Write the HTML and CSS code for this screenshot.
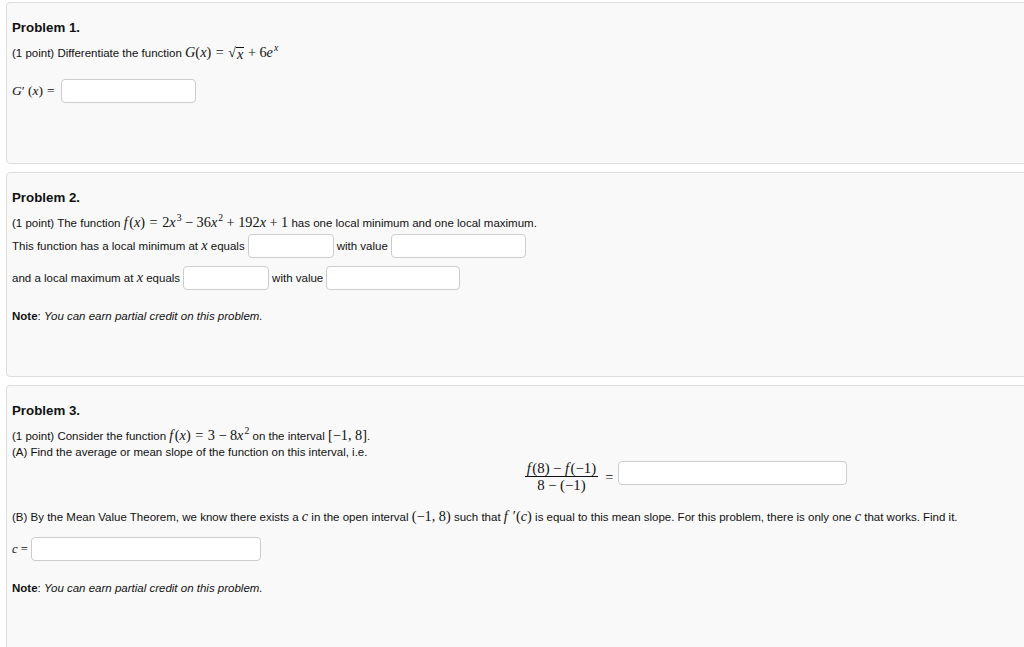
FILE: index.html
```html
<!DOCTYPE html>
<html lang="en">
<head>
<meta charset="utf-8">
<title>Problems</title>
<link rel="stylesheet" href="styles.css">
</head>
<body>
<main class="set">

  <section class="problem problem-1">
    <h3 class="problem-title">Problem 1.</h3>
    <p class="text">(1 point) Differentiate the function <span class="math"><i>G</i>(<i>x</i>)<span class="rel">=</span><span class="sqrt"><span class="radic">√</span><span class="radicand"><i>x</i></span></span><span class="op">+</span>6<i>e</i><sup><i>x</i></sup></span></p>
    <div class="answer-row row-first">
      <span class="math label-math"><i>G</i>′ (<i>x</i>)<span class="rel">=</span></span>
      <input class="answer w-135" type="text">
    </div>
  </section>

  <section class="problem problem-2">
    <h3 class="problem-title">Problem 2.</h3>
    <p class="text">(1 point) The function <span class="math"><i class="fn">f</i>(<i>x</i>)<span class="rel">=</span>2<i>x</i><sup>3</sup><span class="op">−</span>36<i>x</i><sup>2</sup><span class="op">+</span>192<i>x</i><span class="op">+</span>1</span> has one local minimum and one local maximum.</p>
    <div class="answer-row row-tight">
      <span>This function has a local minimum at <span class="math"><i>x</i></span> equals</span>
      <input class="answer w-86" type="text">
      <span>with value</span>
      <input class="answer w-135" type="text">
    </div>
    <div class="answer-row row-next">
      <span>and a local maximum at <span class="math"><i>x</i></span> equals</span>
      <input class="answer w-86" type="text">
      <span>with value</span>
      <input class="answer w-134" type="text">
    </div>
    <p class="note note-2"><b>Note</b>: <em>You can earn partial credit on this problem.</em></p>
  </section>

  <section class="problem problem-3">
    <h3 class="problem-title">Problem 3.</h3>
    <p class="text">(1 point) Consider the function <span class="math"><i class="fn">f</i>(<i>x</i>)<span class="rel">=</span>3<span class="op">−</span>8<i>x</i><sup>2</sup></span> on the interval <span class="math">[−1, 8]</span>.<br>(A) Find the average or mean slope of the function on this interval, i.e.</p>
    <div class="display">
      <span class="math frac">
        <span class="num"><i class="fn">f</i>(8)<span class="op">−</span><i class="fn">f</i>(−1)</span>
        <span class="den">8<span class="op">−</span>(−1)</span>
      </span>
      <span class="math eq">=</span>
      <input class="answer w-229" type="text">
    </div>
    <p class="text part-b">(B) By the Mean Value Theorem, we know there exists a <span class="math"><i>c</i></span> in the open interval <span class="math">(−1, 8)</span> such that <span class="math"><i class="fn">f</i> ′(<i>c</i>)</span> is equal to this mean slope. For this problem, there is only one <span class="math"><i>c</i></span> that works. Find it.</p>
    <div class="answer-row row-c">
      <span class="math small-math"><i>c</i> =</span>
      <input class="answer w-230" type="text">
    </div>
    <p class="note note-3"><b>Note</b>: <em>You can earn partial credit on this problem.</em></p>
  </section>

</main>
</body>
</html>
```

FILE: styles.css
```css
html, body {
  margin: 0;
  padding: 0;
  overflow: hidden;
  background: #ffffff;
}

body {
  font-family: "Liberation Sans", Arial, Helvetica, sans-serif;
  font-size: 11.5px;
  line-height: 16px;
  color: #111111;
}

.set {
  padding: 2px 0 0 6px;
  display: flex;
  flex-direction: column;
  gap: 8px;
}

.problem {
  box-sizing: border-box;
  width: 1360px;
  background: #f9f9f9;
  border: 1px solid #dddddd;
  border-radius: 4px;
  padding: 17px 5px 0 5px;
}

.problem-1 { height: 162px; }
.problem-2 { height: 205px; }
.problem-3 { height: 320px; }

.problem-title {
  margin: 0;
  font-size: 13.3px;
  font-weight: bold;
  line-height: 16px;
}

.text {
  margin: 9px 0 0 0;
}

.answer-row {
  display: flex;
  align-items: center;
  gap: 3px;
  height: 24px;
}

.row-first { margin-top: 18px; }
.row-tight { margin-top: 3px; }
.row-next { margin-top: 8px; }
.row-c { margin-top: 12px; }

.answer {
  box-sizing: border-box;
  height: 24px;
  margin: 0;
  padding: 2px 6px;
  border: 1px solid #cccccc;
  border-radius: 4px;
  background: #ffffff;
  font: inherit;
}

.w-86 { width: 86px; }
.w-134 { width: 134px; }
.w-135 { width: 135px; }
.w-229 { width: 229px; }
.w-230 { width: 230px; }

.math {
  font-family: "Liberation Serif", "Times New Roman", "DejaVu Serif", serif;
  font-size: 14.3px;
  line-height: 1;
  white-space: nowrap;
}

.label-math {
  font-size: 13.5px;
}

.label-math .rel {
  padding: 0 3px 0 4px;
}

.math i {
  font-style: italic;
}

.math i.fn {
  margin-right: 1.5px;
}

.math sup {
  font-size: 68%;
  line-height: 0;
  vertical-align: 0.6em;
  margin-left: 1px;
}

.rel {
  padding: 0 4.5px;
}

.op {
  padding: 0 3.5px;
}

.sqrt {
  display: inline-flex;
  align-items: flex-end;
  line-height: 1;
}

.radic {
  font-size: 14px;
  line-height: 1;
}

.radicand {
  border-top: 1px solid #111111;
  line-height: 12px;
  padding: 0 1px;
}

.display {
  display: flex;
  justify-content: center;
  align-items: center;
  gap: 5px;
  margin-top: 0;
  height: 32px;
}

.frac {
  display: inline-flex;
  flex-direction: column;
  align-items: center;
  font-size: 14.8px;
  line-height: 16px;
  margin-right: 2px;
}

.frac .num {
  padding: 0 2px;
  border-bottom: 1px solid #111111;
}

.frac .den {
  padding: 0 2px;
}

.eq {
  margin-top: 3px;
}

.display .answer {
  margin-bottom: 6px;
}

.part-b {
  margin-top: 17px;
}

.small-math {
  font-size: 12.5px;
}

.note {
  margin: 0;
}

.note-2 { margin-top: 18px; }
.note-3 { margin-top: 19px; }

.note em {
  font-style: italic;
}
```
